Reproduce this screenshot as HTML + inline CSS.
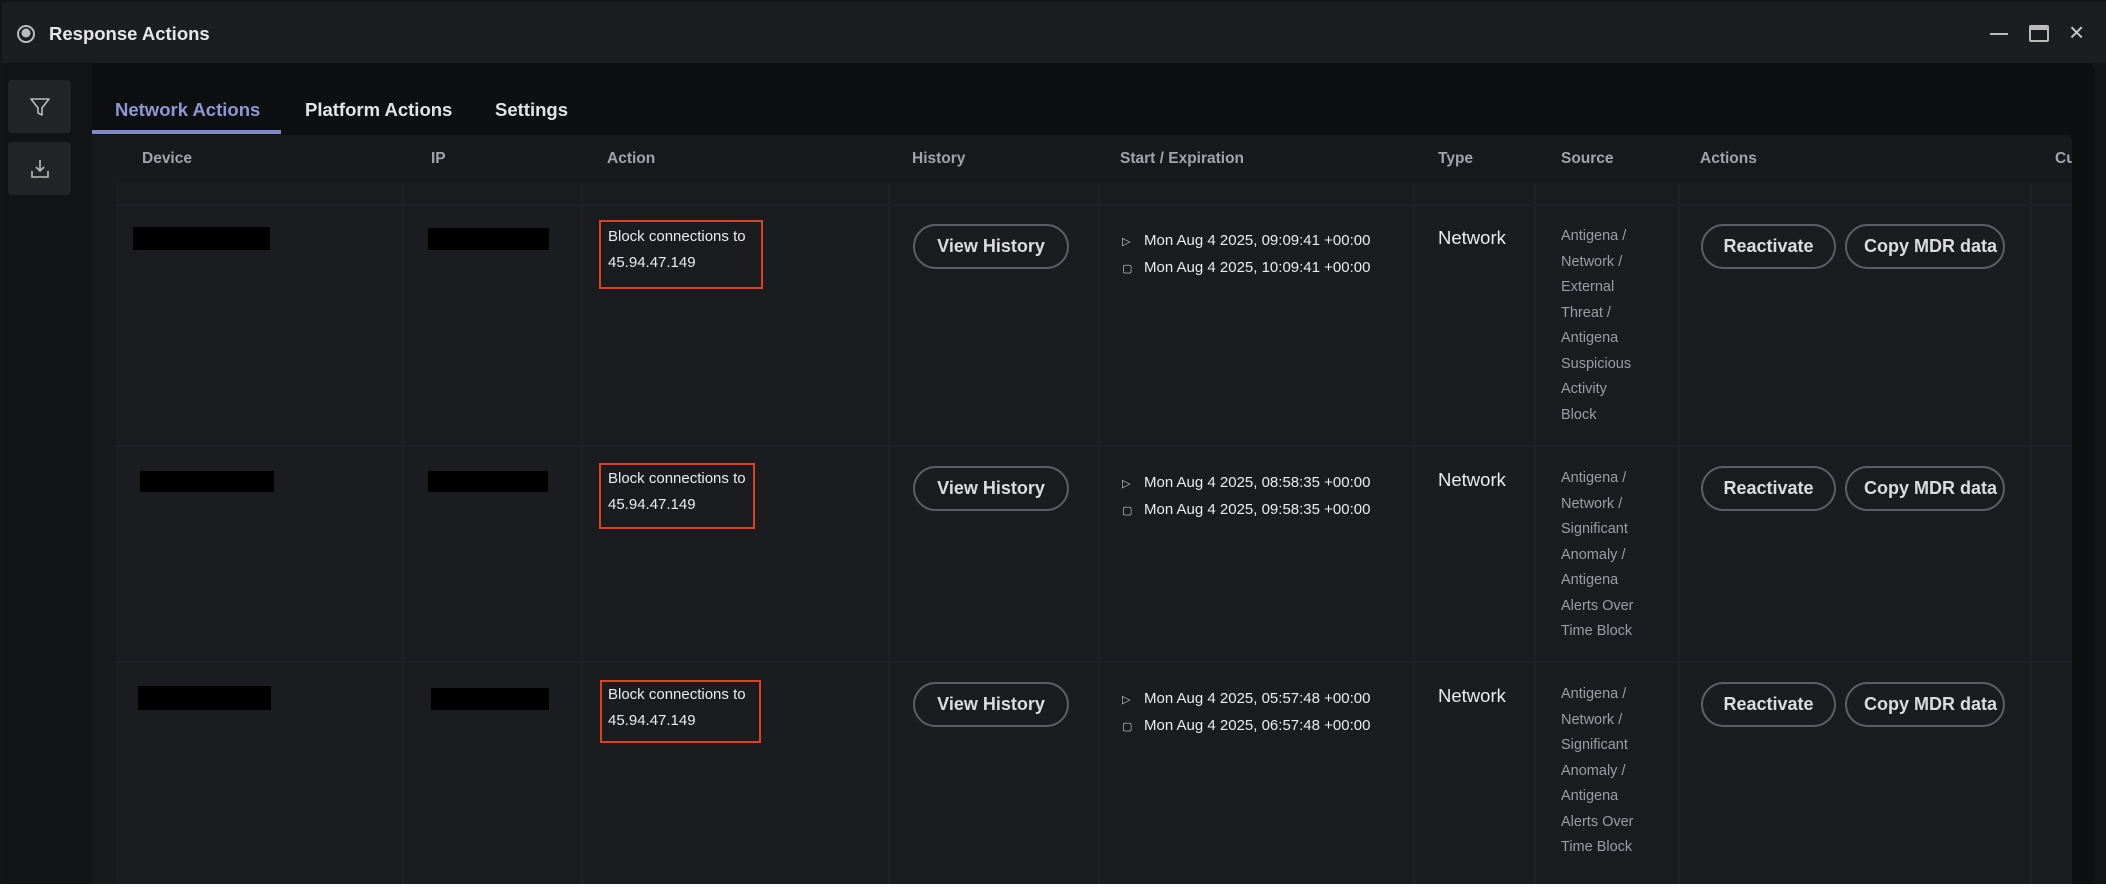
<!DOCTYPE html>
<html><head><meta charset="utf-8"><style>
*{margin:0;padding:0;box-sizing:border-box}
body{width:2106px;height:888px;overflow:hidden;background:#fff;font-family:"Liberation Sans",sans-serif;position:relative}
.a{position:absolute}
.t{position:absolute;white-space:nowrap}
.hdr{color:#a3a4a9;font-size:15.5px;font-weight:bold;top:150px}
.blk{background:#000;position:absolute}
.red{position:absolute;border:2px solid #e0401f}
.bt{position:absolute;border:2px solid #5d5e63;border-radius:23px;color:#dcdcdf;font-weight:bold;font-size:18px;text-align:center;white-space:nowrap}
.tx{color:#ececee;font-size:15px}
.src{color:#9c9da2;font-size:14.5px;line-height:25.5px}
.vs{position:absolute;width:2px;background:#202126}
.hs{position:absolute;height:2px;background:#202126}
.ic{display:inline-block;width:22px;font-size:11px;color:#ccc}
</style></head><body>
<div class="a" style="left:0;top:0;width:2106px;height:884px;background:#141518"></div>
<div class="a" style="left:2px;top:2px;width:2104px;height:61px;background:#1c1d21"></div>
<svg class="a" style="left:16px;top:24px" width="20" height="20" viewBox="0 0 20 20"><circle cx="10" cy="10" r="8" fill="none" stroke="#bbb" stroke-width="2"/><circle cx="10" cy="9" r="4.5" fill="#bbb"/></svg>
<div class="t" style="left:49px;top:23px;color:#e6e6e8;font-size:18.5px;font-weight:bold">Response Actions</div>
<div class="a" style="left:1990px;top:33px;width:18px;height:2px;background:#bbb"></div>
<div class="a" style="left:2029px;top:25px;width:20px;height:17px;border:2px solid #bbb;border-top-width:5px;border-radius:2px"></div>
<div class="t" style="left:2069px;top:17px;color:#ccc;font-size:26px">×</div>
<div class="a" style="left:7px;top:63px;width:85px;height:821px;background:#121315"></div>
<div class="a" style="left:8px;top:80px;width:63px;height:53px;background:#232428;border-radius:4px"></div>
<div class="a" style="left:8px;top:142px;width:63px;height:53px;background:#232428;border-radius:4px"></div>
<svg class="a" style="left:29px;top:96px" width="22" height="22" viewBox="0 0 22 22"><path d="M2 3h18l-7 9v7l-4-2v-5z" fill="none" stroke="#bbb" stroke-width="1.6" stroke-linejoin="round"/></svg>
<svg class="a" style="left:29px;top:158px" width="22" height="22" viewBox="0 0 22 22"><path d="M11 2v11M7 9l4 4 4-4M3 13v6h16v-6" fill="none" stroke="#bbb" stroke-width="1.6"/></svg>
<div class="a" style="left:92px;top:63px;width:2003px;height:821px;background:#0e0f10;border-top-right-radius:8px"></div>
<div class="t" style="left:115px;top:99px;color:#8e98d6;font-size:18.5px;font-weight:bold">Network Actions</div>
<div class="t" style="left:305px;top:99px;color:#e4e4e6;font-size:18.5px;font-weight:bold">Platform Actions</div>
<div class="t" style="left:495px;top:99px;color:#e4e4e6;font-size:18.5px;font-weight:bold">Settings</div>
<div class="a" style="left:92px;top:130px;width:189px;height:4px;background:#7e8bc7"></div>
<div class="a" style="left:92px;top:135px;width:1980px;height:749px;background:#18191d;border-top-right-radius:6px"></div>
<div class="a" style="left:116px;top:183px;width:1956px;height:701px;background:#1b1c20"></div>
<div class="t hdr" style="left:142px">Device</div>
<div class="t hdr" style="left:431px">IP</div>
<div class="t hdr" style="left:607px">Action</div>
<div class="t hdr" style="left:912px">History</div>
<div class="t hdr" style="left:1120px">Start / Expiration</div>
<div class="t hdr" style="left:1438px">Type</div>
<div class="t hdr" style="left:1561px">Source</div>
<div class="t hdr" style="left:1700px">Actions</div>
<div class="t hdr" style="left:2055px;width:17px;overflow:hidden">Cu</div>
<div class="hs" style="left:116px;top:204px;width:1956px"></div>
<div class="hs" style="left:116px;top:445px;width:1956px"></div>
<div class="hs" style="left:116px;top:661px;width:1956px"></div>
<div class="vs" style="left:402px;top:183px;height:701px"></div>
<div class="vs" style="left:581px;top:183px;height:701px"></div>
<div class="vs" style="left:888px;top:183px;height:701px"></div>
<div class="vs" style="left:1098px;top:183px;height:701px"></div>
<div class="vs" style="left:1413px;top:183px;height:701px"></div>
<div class="vs" style="left:1534px;top:183px;height:701px"></div>
<div class="vs" style="left:1678px;top:183px;height:701px"></div>
<div class="vs" style="left:2030px;top:183px;height:701px"></div>

<!-- row1 -->
<div class="blk" style="left:133px;top:227px;width:137px;height:23px"></div>
<div class="blk" style="left:428px;top:228px;width:121px;height:22px"></div>
<div class="red" style="left:599px;top:220px;width:164px;height:69px"></div>
<div class="t tx" style="left:608px;top:228px">Block connections to</div>
<div class="t tx" style="left:608px;top:254px">45.94.47.149</div>
<div class="bt" style="left:913px;top:224px;width:156px;height:45px;line-height:41px">View History</div>
<div class="t tx" style="left:1122px;top:228px;line-height:26px"><span class="ic">▷</span>Mon Aug 4 2025, 09:09:41 +00:00<br><span class="ic">▢</span>Mon Aug 4 2025, 10:09:41 +00:00</div>
<div class="t" style="left:1438px;top:227px;color:#ececee;font-size:18.5px">Network</div>
<div class="t src" style="left:1561px;top:224px">Antigena /<br>Network /<br>External<br>Threat /<br>Antigena<br>Suspicious<br>Activity<br>Block</div>
<div class="bt" style="left:1701px;top:224px;width:135px;height:45px;line-height:41px">Reactivate</div>
<div class="bt" style="left:1845px;top:224px;width:160px;height:45px;line-height:41px;overflow:hidden;text-align:left;padding-left:17px">Copy MDR data</div>

<!-- row2 -->
<div class="blk" style="left:140px;top:471px;width:134px;height:21px"></div>
<div class="blk" style="left:428px;top:471px;width:120px;height:21px"></div>
<div class="red" style="left:599px;top:463px;width:156px;height:66px"></div>
<div class="t tx" style="left:608px;top:470px">Block connections to</div>
<div class="t tx" style="left:608px;top:496px">45.94.47.149</div>
<div class="bt" style="left:913px;top:466px;width:156px;height:45px;line-height:41px">View History</div>
<div class="t tx" style="left:1122px;top:470px;line-height:26px"><span class="ic">▷</span>Mon Aug 4 2025, 08:58:35 +00:00<br><span class="ic">▢</span>Mon Aug 4 2025, 09:58:35 +00:00</div>
<div class="t" style="left:1438px;top:469px;color:#ececee;font-size:18.5px">Network</div>
<div class="t src" style="left:1561px;top:466px">Antigena /<br>Network /<br>Significant<br>Anomaly /<br>Antigena<br>Alerts Over<br>Time Block</div>
<div class="bt" style="left:1701px;top:466px;width:135px;height:45px;line-height:41px">Reactivate</div>
<div class="bt" style="left:1845px;top:466px;width:160px;height:45px;line-height:41px;overflow:hidden;text-align:left;padding-left:17px">Copy MDR data</div>

<!-- row3 -->
<div class="blk" style="left:138px;top:686px;width:133px;height:24px"></div>
<div class="blk" style="left:431px;top:688px;width:118px;height:22px"></div>
<div class="red" style="left:600px;top:680px;width:161px;height:63px"></div>
<div class="t tx" style="left:608px;top:686px">Block connections to</div>
<div class="t tx" style="left:608px;top:712px">45.94.47.149</div>
<div class="bt" style="left:913px;top:682px;width:156px;height:45px;line-height:41px">View History</div>
<div class="t tx" style="left:1122px;top:686px;line-height:26px"><span class="ic">▷</span>Mon Aug 4 2025, 05:57:48 +00:00<br><span class="ic">▢</span>Mon Aug 4 2025, 06:57:48 +00:00</div>
<div class="t" style="left:1438px;top:685px;color:#ececee;font-size:18.5px">Network</div>
<div class="t src" style="left:1561px;top:682px">Antigena /<br>Network /<br>Significant<br>Anomaly /<br>Antigena<br>Alerts Over<br>Time Block</div>
<div class="bt" style="left:1701px;top:682px;width:135px;height:45px;line-height:41px">Reactivate</div>
<div class="bt" style="left:1845px;top:682px;width:160px;height:45px;line-height:41px;overflow:hidden;text-align:left;padding-left:17px">Copy MDR data</div>
</body></html>
